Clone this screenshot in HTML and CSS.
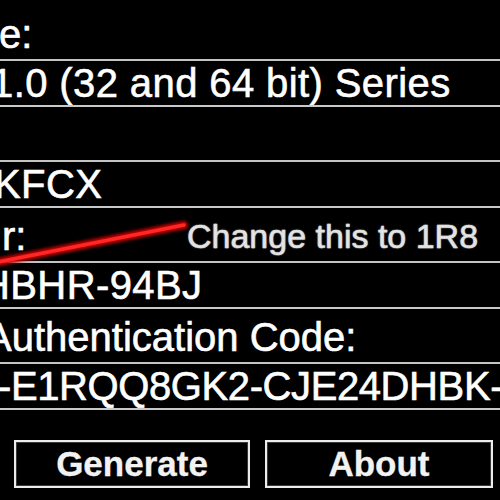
FILE: index.html
```html
<!DOCTYPE html>
<html>
<head>
<meta charset="utf-8">
<link rel="stylesheet" href="styles.css">
</head>
<body>
<div class="win">
  <div class="label label-e">e:</div>
  <div class="field"><span class="val val-1">1.0 (32 and 64 bit) Series</span></div>
  <div class="label"></div>
  <div class="field"><span class="val val-2">KFCX</span></div>
  <div class="label label-r">r:</div>
  <div class="field"><span class="val val-3">HBHR-94BJ</span></div>
  <div class="label label-a">Authentication Code:</div>
  <div class="field"><span class="val val-4">-E1RQQ8GK2-CJE24DHBK-</span></div>
  <div class="buttons">
    <div class="btn btn-gen">Generate</div>
    <div class="btn btn-about">About</div>
  </div>

  <svg class="arrow" width="200" height="60" viewBox="0 0 200 60">
    <defs>
      <filter id="glow" x="-10%" y="-50%" width="120%" height="200%">
        <feGaussianBlur stdDeviation="1.8"/>
      </filter>
    </defs>
    <line x1="-2" y1="47" x2="184" y2="10" stroke="#c00000" stroke-width="8" stroke-linecap="round" filter="url(#glow)"/>
    <line x1="-2" y1="47" x2="184" y2="10" stroke="#ff2626" stroke-width="3.5" stroke-linecap="round"/>
  </svg>
  <div class="note">Change this to 1R8</div>
</div>
</body>
</html>
```
FILE: styles.css
```css
html, body {
  margin: 0;
  padding: 0;
  background: #000;
  overflow: hidden;
}

.win {
  position: relative;
  width: 500px;
  height: 500px;
  padding-top: 6px;
  box-sizing: border-box;
  overflow: hidden;
  background: #000;
  color: #fff;
  font-family: "Liberation Sans", Arial, sans-serif;
  font-size: 40px;
  -webkit-text-stroke: 0.6px #fff;
}

.label {
  height: 53px;
  box-sizing: border-box;
  padding-top: 8px;
  line-height: 40px;
  white-space: nowrap;
}

.label-e { text-indent: -1px; }
.label-r { text-indent: 2px; }
.label-a { text-indent: -15px; }

.field {
  height: 48px;
  box-sizing: border-box;
  border-top: 2px solid #c4c4c4;
  border-bottom: 2px solid #c8c8c8;
  line-height: 44px;
  white-space: nowrap;
  overflow: hidden;
}

.val { display: inline-block; letter-spacing: 0.4px; }
.val-1 { margin-left: -9px; }
.val-2 { margin-left: -6px; }
.val-3 { margin-left: -19px; }
.val-4 { margin-left: -2px; letter-spacing: -0.4px; }

.buttons {
  display: flex;
  gap: 15px;
  margin-top: 30px;
  padding-left: 14px;
}

.btn {
  height: 48px;
  box-sizing: border-box;
  border: 2px solid #ececec;
  box-shadow: inset 0 0 0 1px #3a3a3a;
  font-weight: bold;
  font-size: 35px;
  line-height: 44px;
  text-align: center;
  color: #f2f2f2;
  -webkit-text-stroke: 0.3px #f2f2f2;
}

.btn-gen { width: 236px; }
.btn-about { width: 228px; }

.arrow {
  position: absolute;
  left: 0;
  top: 215px;
}

.note {
  position: absolute;
  left: 187px;
  top: 219px;
  font-size: 34px;
  line-height: 34px;
  color: #e4e4e4;
  white-space: nowrap;
  -webkit-text-stroke: 0.4px #d8d8d8;
  text-shadow: 0 0 1px #bbb, 0 0 2px #777;
}
```
